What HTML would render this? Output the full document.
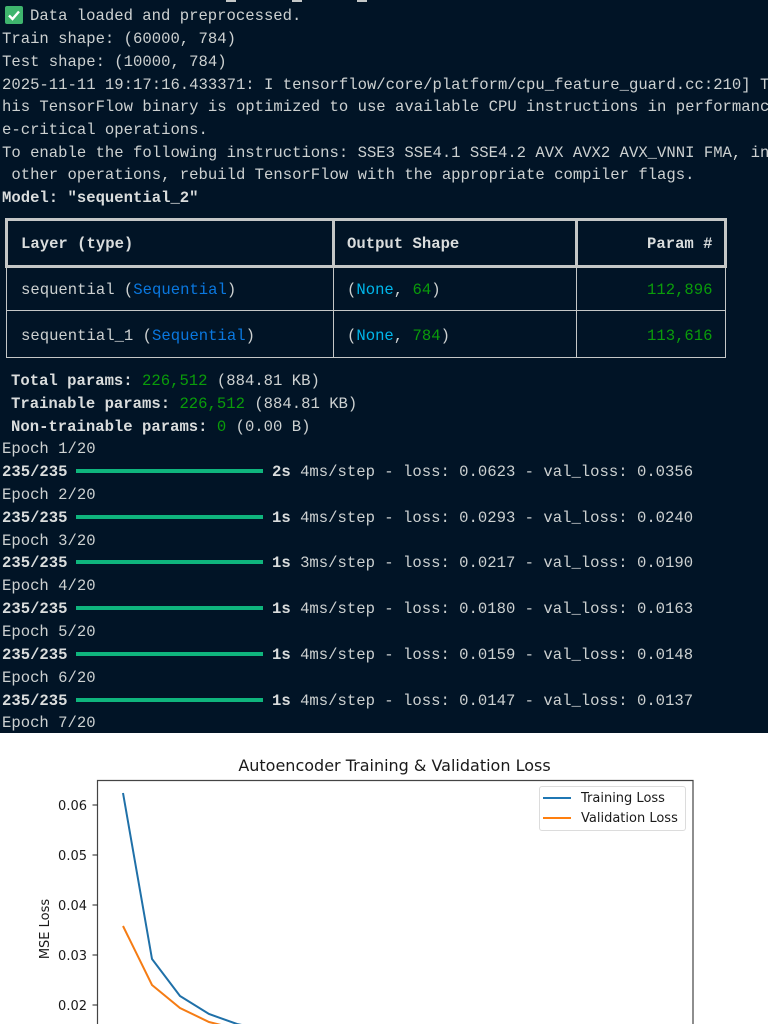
<!DOCTYPE html>
<html><head><meta charset="utf-8"><style>
html,body{margin:0;padding:0;background:#fff}
#p{position:relative;width:768px;height:1024px;overflow:hidden;background:#fff}
#t{position:absolute;left:0;top:0;width:768px;height:733px;background:#011426;overflow:hidden;font:15.6px/23px "Liberation Mono",monospace;color:#cdd1d1}
.l{position:absolute;white-space:pre;height:23px;filter:blur(.25px)}
b{font-weight:bold;color:#dadddd}
.g{color:#0a9c0a}.c{color:#00b7eb}.s{color:#0a78e0}
.bar{position:absolute;left:76px;width:187px;height:4px;background:#0fb57d}
.v,.h{position:absolute;background:#c4c7c7}
</style></head><body><div id="p">
<div id="t">
<div class="h" style="left:226px;top:0;width:10px;height:2px"></div>
<div class="h" style="left:292px;top:0;width:10px;height:2px"></div>
<div class="h" style="left:357px;top:0;width:10px;height:2px"></div>
<svg style="position:absolute;left:5px;top:6px" width="18" height="18"><rect width="18" height="18" rx="2" fill="#3fb56e"/><path d="M4 9.5l3.5 3.5L14 5.5" fill="none" stroke="#fff" stroke-width="2.4"/></svg>
<div class="l" style="left:30px;top:5px">Data loaded and preprocessed.</div>
<div class="l" style="left:2px;top:28px">Train shape: (60000, 784)</div>
<div class="l" style="left:2px;top:51px">Test shape: (10000, 784)</div>
<div class="l" style="left:2px;top:74px">2025-11-11 19:17:16.433371: I tensorflow/core/platform/cpu_feature_guard.cc:210] T</div>
<div class="l" style="left:2px;top:96px">his TensorFlow binary is optimized to use available CPU instructions in performanc</div>
<div class="l" style="left:2px;top:119px">e-critical operations.</div>
<div class="l" style="left:2px;top:142px">To enable the following instructions: SSE3 SSE4.1 SSE4.2 AVX AVX2 AVX_VNNI FMA, in</div>
<div class="l" style="left:2px;top:164px"> other operations, rebuild TensorFlow with the appropriate compiler flags.</div>
<div class="l" style="left:2px;top:187px"><b>Model: "sequential_2"</b></div>

<div class="h" style="left:5px;top:218px;width:722px;height:3px"></div>
<div class="h" style="left:5px;top:265px;width:722px;height:3px"></div>
<div class="v" style="left:5px;top:218px;width:3px;height:50px"></div>
<div class="v" style="left:332px;top:218px;width:3px;height:50px"></div>
<div class="v" style="left:575px;top:218px;width:3px;height:50px"></div>
<div class="v" style="left:724px;top:218px;width:3px;height:50px"></div>
<div class="h" style="left:6px;top:310px;width:720px;height:1px"></div>
<div class="h" style="left:6px;top:357px;width:720px;height:1px"></div>
<div class="v" style="left:6px;top:268px;width:1px;height:90px"></div>
<div class="v" style="left:333px;top:268px;width:1px;height:90px"></div>
<div class="v" style="left:576px;top:268px;width:1px;height:90px"></div>
<div class="v" style="left:725px;top:268px;width:1px;height:90px"></div>

<div class="l" style="left:21px;top:233px"><b>Layer (type)</b></div>
<div class="l" style="left:347px;top:233px"><b>Output Shape</b></div>
<div class="l" style="left:647px;top:233px"><b>Param #</b></div>
<div class="l" style="left:21px;top:279px">sequential (<span class="s">Sequential</span>)</div>
<div class="l" style="left:347px;top:279px">(<span class="c">None</span>, <span class="g">64</span>)</div>
<div class="l" style="left:647px;top:279px"><span class="g">112,896</span></div>
<div class="l" style="left:21px;top:325px">sequential_1 (<span class="s">Sequential</span>)</div>
<div class="l" style="left:347px;top:325px">(<span class="c">None</span>, <span class="g">784</span>)</div>
<div class="l" style="left:647px;top:325px"><span class="g">113,616</span></div>

<div class="l" style="left:11px;top:370px"><b>Total params:</b> <span class="g">226,512</span> (884.81 KB)</div>
<div class="l" style="left:11px;top:393px"><b>Trainable params:</b> <span class="g">226,512</span> (884.81 KB)</div>
<div class="l" style="left:11px;top:416px"><b>Non-trainable params:</b> <span class="g">0</span> (0.00 B)</div>

<div class="l" style="left:2px;top:438px">Epoch 1/20</div>
<div class="l" style="left:2px;top:461px"><b>235/235</b></div><div class="bar" style="top:469px"></div>
<div class="l" style="left:272px;top:461px"><b>2s</b> 4ms/step - loss: 0.0623 - val_loss: 0.0356</div>
<div class="l" style="left:2px;top:484px">Epoch 2/20</div>
<div class="l" style="left:2px;top:507px"><b>235/235</b></div><div class="bar" style="top:515px"></div>
<div class="l" style="left:272px;top:507px"><b>1s</b> 4ms/step - loss: 0.0293 - val_loss: 0.0240</div>
<div class="l" style="left:2px;top:530px">Epoch 3/20</div>
<div class="l" style="left:2px;top:552px"><b>235/235</b></div><div class="bar" style="top:560px"></div>
<div class="l" style="left:272px;top:552px"><b>1s</b> 3ms/step - loss: 0.0217 - val_loss: 0.0190</div>
<div class="l" style="left:2px;top:575px">Epoch 4/20</div>
<div class="l" style="left:2px;top:598px"><b>235/235</b></div><div class="bar" style="top:606px"></div>
<div class="l" style="left:272px;top:598px"><b>1s</b> 4ms/step - loss: 0.0180 - val_loss: 0.0163</div>
<div class="l" style="left:2px;top:621px">Epoch 5/20</div>
<div class="l" style="left:2px;top:644px"><b>235/235</b></div><div class="bar" style="top:652px"></div>
<div class="l" style="left:272px;top:644px"><b>1s</b> 4ms/step - loss: 0.0159 - val_loss: 0.0148</div>
<div class="l" style="left:2px;top:667px">Epoch 6/20</div>
<div class="l" style="left:2px;top:690px"><b>235/235</b></div><div class="bar" style="top:698px"></div>
<div class="l" style="left:272px;top:690px"><b>1s</b> 4ms/step - loss: 0.0147 - val_loss: 0.0137</div>
<div class="l" style="left:2px;top:712px">Epoch 7/20</div>
</div>

<svg style="position:absolute;left:0;top:733px" width="768" height="291" viewBox="0 733 768 291" font-family="'DejaVu Sans',sans-serif" font-size="13" fill="#1a1a1a">
<text x="394.5" y="771" text-anchor="middle" font-size="16">Autoencoder Training &amp; Validation Loss</text>
<path d="M97.5 1030V780.5H693V1030" fill="none" stroke="#444" stroke-width="1.2"/>
<path d="M92.5 805H97.5M92.5 855H97.5M92.5 905H97.5M92.5 955H97.5M92.5 1005H97.5" stroke="#222" stroke-width="1"/>
<text x="87" y="810" text-anchor="end">0.06</text>
<text x="87" y="860" text-anchor="end">0.05</text>
<text x="87" y="910" text-anchor="end">0.04</text>
<text x="87" y="960" text-anchor="end">0.03</text>
<text x="87" y="1010" text-anchor="end">0.02</text>
<text transform="translate(49 929) rotate(-90)" text-anchor="middle" font-size="13">MSE Loss</text>
<polyline points="123,793 152,959 180,996 209,1014 237,1024 266,1030" fill="none" stroke="#1f70a8" stroke-width="2"/>
<polyline points="123,926 152,985 180,1008 209,1022 237,1029" fill="none" stroke="#f57c14" stroke-width="2"/>
<rect x="539.5" y="786.5" width="146" height="44" rx="2.5" fill="#fff" stroke="#dcdcdc"/>
<path d="M543 798H571" stroke="#1f77b4" stroke-width="2"/>
<path d="M543 818H571" stroke="#ff7f0e" stroke-width="2"/>
<text x="581" y="802">Training Loss</text>
<text x="581" y="822">Validation Loss</text>
</svg>
</div></body></html>
